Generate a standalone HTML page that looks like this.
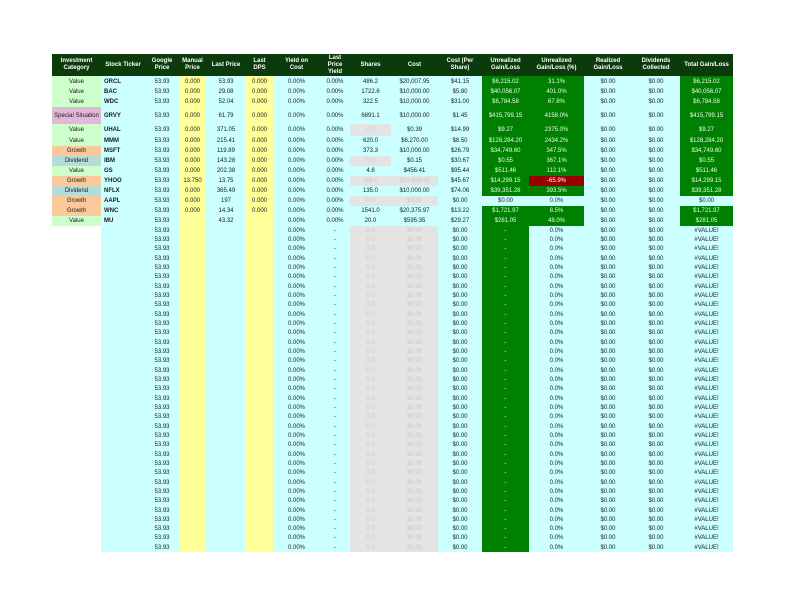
<!DOCTYPE html>
<html><head><meta charset="utf-8"><style>
body{margin:0;background:#fff;width:790px;height:611px;overflow:hidden;position:relative}
table{position:absolute;left:52px;top:54px;width:681px;border-collapse:collapse;table-layout:fixed;font-family:"Liberation Sans",Arial,sans-serif;font-size:6px;color:#1a1a1a}
td,th{padding:0;text-align:center;white-space:nowrap;overflow:hidden;line-height:1}
th{background:#0b3a0b;color:#fff;font-weight:bold;height:22px;white-space:normal;line-height:7px;overflow:visible;padding:0 3px}
tr.d td{height:10px}
tr.e td{height:9.34px}
td{background:#ccffff}
td.t{font-weight:bold;text-align:left;padding-left:3px}
td.y{background:#ffff99}
td.w{background:#fff}
td.g{background:#e4e4e4;color:#c8c8c8}
td.G{background:#008000;color:#e8ffe8}
td.R{background:#990000;color:#fff}
td.v{background:#ccffcc}
td.gr{background:#fcc99a}
td.dv{background:#b5dcd8}
td.ss{background:#e2b8d8}
</style></head><body>
<table>
<colgroup><col style="width:49px"><col style="width:44px"><col style="width:34px"><col style="width:27px"><col style="width:40px"><col style="width:27px"><col style="width:47px"><col style="width:30px"><col style="width:41px"><col style="width:47px"><col style="width:44px"><col style="width:47px"><col style="width:55px"><col style="width:48px"><col style="width:48px"><col style="width:53px"></colgroup>
<tr><th>Investment Category</th><th>Stock Ticker</th><th>Google Price</th><th>Manual Price</th><th>Last Price</th><th>Last DPS</th><th style="padding:0 10px">Yield on Cost</th><th style="padding:0 6px">Last Price Yield</th><th>Shares</th><th>Cost</th><th>Cost (Per Share)</th><th>Unrealized Gain/Loss</th><th>Unrealized Gain/Loss (%)</th><th>Realized Gain/Loss</th><th>Dividends Collected</th><th>Total Gain/Loss</th></tr>
<tr class="d"><td class="v" style="height:11px">Value</td><td class="t">ORCL</td><td>53.93</td><td class="y">0.000</td><td>53.93</td><td class="y">0.000</td><td>0.00%</td><td>0.00%</td><td>486.2</td><td>$20,007.95</td><td>$41.15</td><td class="G">$6,215.02</td><td class="G">31.1%</td><td>$0.00</td><td>$0.00</td><td class="G">$6,215.02</td></tr>
<tr class="d"><td class="v">Value</td><td class="t">BAC</td><td>53.93</td><td class="y">0.000</td><td>29.08</td><td class="y">0.000</td><td>0.00%</td><td>0.00%</td><td>1722.6</td><td>$10,000.00</td><td>$5.80</td><td class="G">$40,056.07</td><td class="G">401.0%</td><td>$0.00</td><td>$0.00</td><td class="G">$40,056.07</td></tr>
<tr class="d"><td class="v">Value</td><td class="t">WDC</td><td>53.93</td><td class="y">0.000</td><td>52.04</td><td class="y">0.000</td><td>0.00%</td><td>0.00%</td><td>322.5</td><td>$10,000.00</td><td>$31.00</td><td class="G">$6,784.58</td><td class="G">67.8%</td><td>$0.00</td><td>$0.00</td><td class="G">$6,784.58</td></tr>
<tr class="d"><td class="ss" style="height:17px">Special Situation</td><td class="t">GRVY</td><td>53.93</td><td class="y">0.000</td><td>61.79</td><td class="y">0.000</td><td>0.00%</td><td>0.00%</td><td>6891.1</td><td>$10,000.00</td><td>$1.45</td><td class="G">$415,799.15</td><td class="G">4158.0%</td><td>$0.00</td><td>$0.00</td><td class="G">$415,799.15</td></tr>
<tr class="d"><td class="v" style="height:12px">Value</td><td class="t">UHAL</td><td>53.93</td><td class="y">0.000</td><td>371.05</td><td class="y">0.000</td><td>0.00%</td><td>0.00%</td><td class="g">0.0</td><td>$0.39</td><td>$14.99</td><td class="G">$9.27</td><td class="G">2375.0%</td><td>$0.00</td><td>$0.00</td><td class="G">$9.27</td></tr>
<tr class="d"><td class="v">Value</td><td class="t">MMM</td><td>53.93</td><td class="y">0.000</td><td>215.41</td><td class="y">0.000</td><td>0.00%</td><td>0.00%</td><td>620.0</td><td>$6,270.00</td><td>$8.50</td><td class="G">$128,284.20</td><td class="G">2434.2%</td><td>$0.00</td><td>$0.00</td><td class="G">$128,284.20</td></tr>
<tr class="d"><td class="gr">Growth</td><td class="t">MSFT</td><td>53.93</td><td class="y">0.000</td><td>119.89</td><td class="y">0.000</td><td>0.00%</td><td>0.00%</td><td>373.3</td><td>$10,000.00</td><td>$26.79</td><td class="G">$34,749.60</td><td class="G">347.5%</td><td>$0.00</td><td>$0.00</td><td class="G">$34,749.60</td></tr>
<tr class="d"><td class="dv">Dividend</td><td class="t">IBM</td><td>53.93</td><td class="y">0.000</td><td>143.28</td><td class="y">0.000</td><td>0.00%</td><td>0.00%</td><td class="g">0.0</td><td>$0.15</td><td>$30.67</td><td class="G">$0.55</td><td class="G">367.1%</td><td>$0.00</td><td>$0.00</td><td class="G">$0.55</td></tr>
<tr class="d"><td class="v">Value</td><td class="t">GS</td><td>53.93</td><td class="y">0.000</td><td>202.38</td><td class="y">0.000</td><td>0.00%</td><td>0.00%</td><td>4.8</td><td>$456.41</td><td>$95.44</td><td class="G">$511.46</td><td class="G">112.1%</td><td>$0.00</td><td>$0.00</td><td class="G">$511.46</td></tr>
<tr class="d"><td class="gr">Growth</td><td class="t">YHOO</td><td>53.93</td><td class="y">13.750</td><td>13.75</td><td class="y">0.000</td><td>0.00%</td><td>0.00%</td><td class="g">466.0</td><td class="g">$20,409.43</td><td>$45.67</td><td class="G">$14,299.15</td><td class="R">-65.9%</td><td>$0.00</td><td>$0.00</td><td class="G">$14,299.15</td></tr>
<tr class="d"><td class="dv">Dividend</td><td class="t">NFLX</td><td>53.93</td><td class="y">0.000</td><td>365.49</td><td class="y">0.000</td><td>0.00%</td><td>0.00%</td><td>135.0</td><td>$10,000.00</td><td>$74.06</td><td class="G">$39,351.28</td><td class="G">393.5%</td><td>$0.00</td><td>$0.00</td><td class="G">$39,351.28</td></tr>
<tr class="d"><td class="gr">Growth</td><td class="t">AAPL</td><td>53.93</td><td class="y">0.000</td><td>197</td><td class="y">0.000</td><td>0.00%</td><td>0.00%</td><td class="g">0.0</td><td class="g">$0.00</td><td>$0.00</td><td>$0.00</td><td>0.0%</td><td>$0.00</td><td>$0.00</td><td>$0.00</td></tr>
<tr class="d"><td class="gr">Growth</td><td class="t">WNC</td><td>53.93</td><td class="y">0.000</td><td>14.34</td><td class="y">0.000</td><td>0.00%</td><td>0.00%</td><td>1541.0</td><td>$20,375.97</td><td>$13.22</td><td class="G">$1,721.97</td><td class="G">8.5%</td><td>$0.00</td><td>$0.00</td><td class="G">$1,721.97</td></tr>
<tr class="d"><td class="v" style="height:9px">Value</td><td class="t">MU</td><td>53.93</td><td class="y"></td><td>43.32</td><td class="y"></td><td>0.00%</td><td>0.00%</td><td>20.0</td><td>$595.35</td><td>$29.27</td><td class="G">$281.05</td><td class="G">48.0%</td><td>$0.00</td><td>$0.00</td><td class="G">$281.05</td></tr>
<tr class="e"><td class="w"></td><td></td><td>53.93</td><td class="y"></td><td></td><td class="y"></td><td>0.00%</td><td>-</td><td class="g">0.0</td><td class="g">$0.00</td><td>$0.00</td><td class="G">-</td><td>0.0%</td><td>$0.00</td><td>$0.00</td><td>#VALUE!</td></tr>
<tr class="e"><td class="w"></td><td></td><td>53.93</td><td class="y"></td><td></td><td class="y"></td><td>0.00%</td><td>-</td><td class="g">0.0</td><td class="g">$0.00</td><td>$0.00</td><td class="G">-</td><td>0.0%</td><td>$0.00</td><td>$0.00</td><td>#VALUE!</td></tr>
<tr class="e"><td class="w"></td><td></td><td>53.93</td><td class="y"></td><td></td><td class="y"></td><td>0.00%</td><td>-</td><td class="g">0.0</td><td class="g">$0.00</td><td>$0.00</td><td class="G">-</td><td>0.0%</td><td>$0.00</td><td>$0.00</td><td>#VALUE!</td></tr>
<tr class="e"><td class="w"></td><td></td><td>53.93</td><td class="y"></td><td></td><td class="y"></td><td>0.00%</td><td>-</td><td class="g">0.0</td><td class="g">$0.00</td><td>$0.00</td><td class="G">-</td><td>0.0%</td><td>$0.00</td><td>$0.00</td><td>#VALUE!</td></tr>
<tr class="e"><td class="w"></td><td></td><td>53.93</td><td class="y"></td><td></td><td class="y"></td><td>0.00%</td><td>-</td><td class="g">0.0</td><td class="g">$0.00</td><td>$0.00</td><td class="G">-</td><td>0.0%</td><td>$0.00</td><td>$0.00</td><td>#VALUE!</td></tr>
<tr class="e"><td class="w"></td><td></td><td>53.93</td><td class="y"></td><td></td><td class="y"></td><td>0.00%</td><td>-</td><td class="g">0.0</td><td class="g">$0.00</td><td>$0.00</td><td class="G">-</td><td>0.0%</td><td>$0.00</td><td>$0.00</td><td>#VALUE!</td></tr>
<tr class="e"><td class="w"></td><td></td><td>53.93</td><td class="y"></td><td></td><td class="y"></td><td>0.00%</td><td>-</td><td class="g">0.0</td><td class="g">$0.00</td><td>$0.00</td><td class="G">-</td><td>0.0%</td><td>$0.00</td><td>$0.00</td><td>#VALUE!</td></tr>
<tr class="e"><td class="w"></td><td></td><td>53.93</td><td class="y"></td><td></td><td class="y"></td><td>0.00%</td><td>-</td><td class="g">0.0</td><td class="g">$0.00</td><td>$0.00</td><td class="G">-</td><td>0.0%</td><td>$0.00</td><td>$0.00</td><td>#VALUE!</td></tr>
<tr class="e"><td class="w"></td><td></td><td>53.93</td><td class="y"></td><td></td><td class="y"></td><td>0.00%</td><td>-</td><td class="g">0.0</td><td class="g">$0.00</td><td>$0.00</td><td class="G">-</td><td>0.0%</td><td>$0.00</td><td>$0.00</td><td>#VALUE!</td></tr>
<tr class="e"><td class="w"></td><td></td><td>53.93</td><td class="y"></td><td></td><td class="y"></td><td>0.00%</td><td>-</td><td class="g">0.0</td><td class="g">$0.00</td><td>$0.00</td><td class="G">-</td><td>0.0%</td><td>$0.00</td><td>$0.00</td><td>#VALUE!</td></tr>
<tr class="e"><td class="w"></td><td></td><td>53.93</td><td class="y"></td><td></td><td class="y"></td><td>0.00%</td><td>-</td><td class="g">0.0</td><td class="g">$0.00</td><td>$0.00</td><td class="G">-</td><td>0.0%</td><td>$0.00</td><td>$0.00</td><td>#VALUE!</td></tr>
<tr class="e"><td class="w"></td><td></td><td>53.93</td><td class="y"></td><td></td><td class="y"></td><td>0.00%</td><td>-</td><td class="g">0.0</td><td class="g">$0.00</td><td>$0.00</td><td class="G">-</td><td>0.0%</td><td>$0.00</td><td>$0.00</td><td>#VALUE!</td></tr>
<tr class="e"><td class="w"></td><td></td><td>53.93</td><td class="y"></td><td></td><td class="y"></td><td>0.00%</td><td>-</td><td class="g">0.0</td><td class="g">$0.00</td><td>$0.00</td><td class="G">-</td><td>0.0%</td><td>$0.00</td><td>$0.00</td><td>#VALUE!</td></tr>
<tr class="e"><td class="w"></td><td></td><td>53.93</td><td class="y"></td><td></td><td class="y"></td><td>0.00%</td><td>-</td><td class="g">0.0</td><td class="g">$0.00</td><td>$0.00</td><td class="G">-</td><td>0.0%</td><td>$0.00</td><td>$0.00</td><td>#VALUE!</td></tr>
<tr class="e"><td class="w"></td><td></td><td>53.93</td><td class="y"></td><td></td><td class="y"></td><td>0.00%</td><td>-</td><td class="g">0.0</td><td class="g">$0.00</td><td>$0.00</td><td class="G">-</td><td>0.0%</td><td>$0.00</td><td>$0.00</td><td>#VALUE!</td></tr>
<tr class="e"><td class="w"></td><td></td><td>53.93</td><td class="y"></td><td></td><td class="y"></td><td>0.00%</td><td>-</td><td class="g">0.0</td><td class="g">$0.00</td><td>$0.00</td><td class="G">-</td><td>0.0%</td><td>$0.00</td><td>$0.00</td><td>#VALUE!</td></tr>
<tr class="e"><td class="w"></td><td></td><td>53.93</td><td class="y"></td><td></td><td class="y"></td><td>0.00%</td><td>-</td><td class="g">0.0</td><td class="g">$0.00</td><td>$0.00</td><td class="G">-</td><td>0.0%</td><td>$0.00</td><td>$0.00</td><td>#VALUE!</td></tr>
<tr class="e"><td class="w"></td><td></td><td>53.93</td><td class="y"></td><td></td><td class="y"></td><td>0.00%</td><td>-</td><td class="g">0.0</td><td class="g">$0.00</td><td>$0.00</td><td class="G">-</td><td>0.0%</td><td>$0.00</td><td>$0.00</td><td>#VALUE!</td></tr>
<tr class="e"><td class="w"></td><td></td><td>53.93</td><td class="y"></td><td></td><td class="y"></td><td>0.00%</td><td>-</td><td class="g">0.0</td><td class="g">$0.00</td><td>$0.00</td><td class="G">-</td><td>0.0%</td><td>$0.00</td><td>$0.00</td><td>#VALUE!</td></tr>
<tr class="e"><td class="w"></td><td></td><td>53.93</td><td class="y"></td><td></td><td class="y"></td><td>0.00%</td><td>-</td><td class="g">0.0</td><td class="g">$0.00</td><td>$0.00</td><td class="G">-</td><td>0.0%</td><td>$0.00</td><td>$0.00</td><td>#VALUE!</td></tr>
<tr class="e"><td class="w"></td><td></td><td>53.93</td><td class="y"></td><td></td><td class="y"></td><td>0.00%</td><td>-</td><td class="g">0.0</td><td class="g">$0.00</td><td>$0.00</td><td class="G">-</td><td>0.0%</td><td>$0.00</td><td>$0.00</td><td>#VALUE!</td></tr>
<tr class="e"><td class="w"></td><td></td><td>53.93</td><td class="y"></td><td></td><td class="y"></td><td>0.00%</td><td>-</td><td class="g">0.0</td><td class="g">$0.00</td><td>$0.00</td><td class="G">-</td><td>0.0%</td><td>$0.00</td><td>$0.00</td><td>#VALUE!</td></tr>
<tr class="e"><td class="w"></td><td></td><td>53.93</td><td class="y"></td><td></td><td class="y"></td><td>0.00%</td><td>-</td><td class="g">0.0</td><td class="g">$0.00</td><td>$0.00</td><td class="G">-</td><td>0.0%</td><td>$0.00</td><td>$0.00</td><td>#VALUE!</td></tr>
<tr class="e"><td class="w"></td><td></td><td>53.93</td><td class="y"></td><td></td><td class="y"></td><td>0.00%</td><td>-</td><td class="g">0.0</td><td class="g">$0.00</td><td>$0.00</td><td class="G">-</td><td>0.0%</td><td>$0.00</td><td>$0.00</td><td>#VALUE!</td></tr>
<tr class="e"><td class="w"></td><td></td><td>53.93</td><td class="y"></td><td></td><td class="y"></td><td>0.00%</td><td>-</td><td class="g">0.0</td><td class="g">$0.00</td><td>$0.00</td><td class="G">-</td><td>0.0%</td><td>$0.00</td><td>$0.00</td><td>#VALUE!</td></tr>
<tr class="e"><td class="w"></td><td></td><td>53.93</td><td class="y"></td><td></td><td class="y"></td><td>0.00%</td><td>-</td><td class="g">0.0</td><td class="g">$0.00</td><td>$0.00</td><td class="G">-</td><td>0.0%</td><td>$0.00</td><td>$0.00</td><td>#VALUE!</td></tr>
<tr class="e"><td class="w"></td><td></td><td>53.93</td><td class="y"></td><td></td><td class="y"></td><td>0.00%</td><td>-</td><td class="g">0.0</td><td class="g">$0.00</td><td>$0.00</td><td class="G">-</td><td>0.0%</td><td>$0.00</td><td>$0.00</td><td>#VALUE!</td></tr>
<tr class="e"><td class="w"></td><td></td><td>53.93</td><td class="y"></td><td></td><td class="y"></td><td>0.00%</td><td>-</td><td class="g">0.0</td><td class="g">$0.00</td><td>$0.00</td><td class="G">-</td><td>0.0%</td><td>$0.00</td><td>$0.00</td><td>#VALUE!</td></tr>
<tr class="e"><td class="w"></td><td></td><td>53.93</td><td class="y"></td><td></td><td class="y"></td><td>0.00%</td><td>-</td><td class="g">0.0</td><td class="g">$0.00</td><td>$0.00</td><td class="G">-</td><td>0.0%</td><td>$0.00</td><td>$0.00</td><td>#VALUE!</td></tr>
<tr class="e"><td class="w"></td><td></td><td>53.93</td><td class="y"></td><td></td><td class="y"></td><td>0.00%</td><td>-</td><td class="g">0.0</td><td class="g">$0.00</td><td>$0.00</td><td class="G">-</td><td>0.0%</td><td>$0.00</td><td>$0.00</td><td>#VALUE!</td></tr>
<tr class="e"><td class="w"></td><td></td><td>53.93</td><td class="y"></td><td></td><td class="y"></td><td>0.00%</td><td>-</td><td class="g">0.0</td><td class="g">$0.00</td><td>$0.00</td><td class="G">-</td><td>0.0%</td><td>$0.00</td><td>$0.00</td><td>#VALUE!</td></tr>
<tr class="e"><td class="w"></td><td></td><td>53.93</td><td class="y"></td><td></td><td class="y"></td><td>0.00%</td><td>-</td><td class="g">0.0</td><td class="g">$0.00</td><td>$0.00</td><td class="G">-</td><td>0.0%</td><td>$0.00</td><td>$0.00</td><td>#VALUE!</td></tr>
<tr class="e"><td class="w"></td><td></td><td>53.93</td><td class="y"></td><td></td><td class="y"></td><td>0.00%</td><td>-</td><td class="g">0.0</td><td class="g">$0.00</td><td>$0.00</td><td class="G">-</td><td>0.0%</td><td>$0.00</td><td>$0.00</td><td>#VALUE!</td></tr>
<tr class="e"><td class="w"></td><td></td><td>53.93</td><td class="y"></td><td></td><td class="y"></td><td>0.00%</td><td>-</td><td class="g">0.0</td><td class="g">$0.00</td><td>$0.00</td><td class="G">-</td><td>0.0%</td><td>$0.00</td><td>$0.00</td><td>#VALUE!</td></tr>
<tr class="e"><td class="w"></td><td></td><td>53.93</td><td class="y"></td><td></td><td class="y"></td><td>0.00%</td><td>-</td><td class="g">0.0</td><td class="g">$0.00</td><td>$0.00</td><td class="G">-</td><td>0.0%</td><td>$0.00</td><td>$0.00</td><td>#VALUE!</td></tr>
</table>
</body></html>
